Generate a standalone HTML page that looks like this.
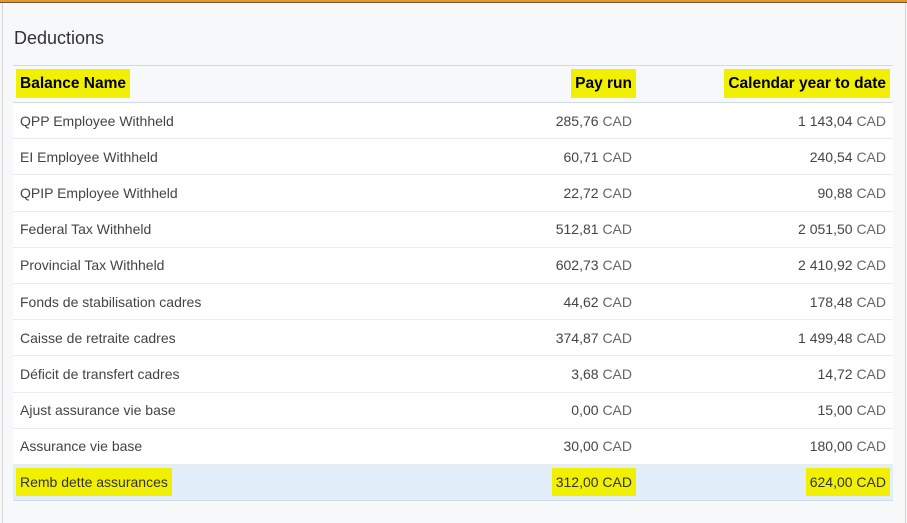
<!DOCTYPE html><html><head><style>
body{margin:0;width:907px;height:516px;background:#f7f7f7;font-family:"Liberation Sans",sans-serif;overflow:hidden;position:relative}
.top{position:absolute;left:0;top:0;width:907px;height:2px;background:#e8932c;border-bottom:1px solid #6b5a3a}
.panel{position:absolute;left:2px;top:3px;width:902px;height:520px;border-left:1px solid #d6d6d6;border-right:1px solid #d6d6d6;background:#f7f8f9}
h1{position:absolute;left:14px;top:28px;margin:0;font-weight:normal;font-size:18px;color:#333}
table{position:absolute;left:13px;top:65px;width:880px;border-collapse:collapse;font-size:14px;color:#444}
th{height:36px;border-top:1px solid #d0dbe5;border-bottom:1px solid #d0dbe5;font-size:15.5px;color:#000;background:#f7f8f9;padding:0 7px}
td{height:35.2px;background:#fff;border-bottom:1px solid #e8ecef;padding:0 7px}
.r{text-align:right}.l{text-align:left}
.hl{background:#f0f000;padding:6px 4px;margin:-6px -4px}
tr.sel td{background:#e2effb;border-bottom:1px solid #d0dbe5}
.c{color:#666}
</style></head><body>
<div class="top"></div><div class="panel"></div>
<h1>Deductions</h1>
<table>
<tr><th class="l"><span class="hl">Balance Name</span></th><th class="r" style="width:230px"><span class="hl">Pay run</span></th><th class="r" style="width:240px"><span class="hl">Calendar year to date</span></th></tr>
<tr><td>QPP Employee Withheld</td><td class="r">285,76 <span class="c">CAD</span></td><td class="r">1 143,04 <span class="c">CAD</span></td></tr>
<tr><td>EI Employee Withheld</td><td class="r">60,71 <span class="c">CAD</span></td><td class="r">240,54 <span class="c">CAD</span></td></tr>
<tr><td>QPIP Employee Withheld</td><td class="r">22,72 <span class="c">CAD</span></td><td class="r">90,88 <span class="c">CAD</span></td></tr>
<tr><td>Federal Tax Withheld</td><td class="r">512,81 <span class="c">CAD</span></td><td class="r">2 051,50 <span class="c">CAD</span></td></tr>
<tr><td>Provincial Tax Withheld</td><td class="r">602,73 <span class="c">CAD</span></td><td class="r">2 410,92 <span class="c">CAD</span></td></tr>
<tr><td>Fonds de stabilisation cadres</td><td class="r">44,62 <span class="c">CAD</span></td><td class="r">178,48 <span class="c">CAD</span></td></tr>
<tr><td>Caisse de retraite cadres</td><td class="r">374,87 <span class="c">CAD</span></td><td class="r">1 499,48 <span class="c">CAD</span></td></tr>
<tr><td>Déficit de transfert cadres</td><td class="r">3,68 <span class="c">CAD</span></td><td class="r">14,72 <span class="c">CAD</span></td></tr>
<tr><td>Ajust assurance vie base</td><td class="r">0,00 <span class="c">CAD</span></td><td class="r">15,00 <span class="c">CAD</span></td></tr>
<tr><td>Assurance vie base</td><td class="r">30,00 <span class="c">CAD</span></td><td class="r">180,00 <span class="c">CAD</span></td></tr>
<tr class="sel"><td><span class="hl" style="color:#333">Remb dette assurances</span></td><td class="r"><span class="hl" style="color:#333">312,00 CAD</span></td><td class="r"><span class="hl" style="color:#333">624,00 CAD</span></td></tr>
</table>
</body></html>
